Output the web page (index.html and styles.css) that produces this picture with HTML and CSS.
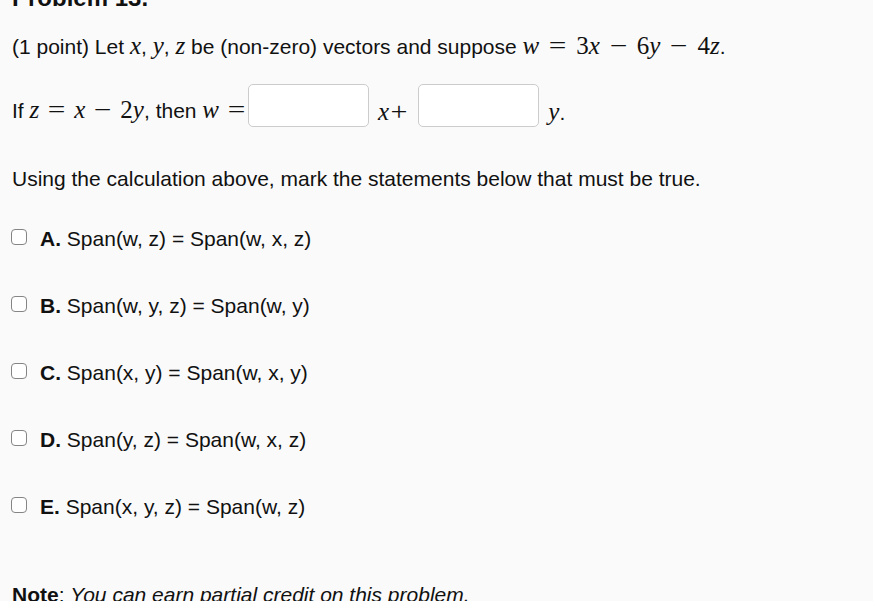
FILE: index.html
```html
<!DOCTYPE html>
<html>
<head>
<meta charset="utf-8">
<link rel="stylesheet" href="styles.css">
</head>
<body>
<div class="page">
  <h3 class="title">Problem 13.</h3>
  <p class="intro">(1 point) Let <span class="m">x</span>, <span class="m">y</span>, <span class="m">z</span> be (non-zero) vectors and suppose <span class="m">w</span><span class="op">=</span><span class="n">3</span><span class="m">x</span><span class="op">−</span><span class="n">6</span><span class="m">y</span><span class="op">−</span><span class="n">4</span><span class="m">z</span>.</p>
  <div class="fill">
    <span class="pre">If <span class="m">z</span><span class="op">=</span><span class="m">x</span><span class="op">−</span><span class="n">2</span><span class="m">y</span>, then <span class="m">w</span><span class="op eq">=</span></span>
    <span class="box"></span>
    <span class="after"><span class="m">x</span><span class="plus">+</span></span>
    <span class="box"></span>
    <span class="after"><span class="m">y</span>.</span>
  </div>
  <p class="instr">Using the calculation above, mark the statements below that must be true.</p>
  <ul class="opts">
    <li><span class="cb"></span><span><b>A.</b> Span(w, z) = Span(w, x, z)</span></li>
    <li><span class="cb"></span><span><b>B.</b> Span(w, y, z) = Span(w, y)</span></li>
    <li><span class="cb"></span><span><b>C.</b> Span(x, y) = Span(w, x, y)</span></li>
    <li><span class="cb"></span><span><b>D.</b> Span(y, z) = Span(w, x, z)</span></li>
    <li><span class="cb"></span><span><b>E.</b> Span(x, y, z) = Span(w, z)</span></li>
  </ul>
  <p class="note"><b>Note</b>: <i>You can earn partial credit on this problem.</i></p>
</div>
</body>
</html>
```

FILE: styles.css
```css
html, body {
  margin: 0;
  padding: 0;
  background: #fafafa;
}
body {
  font-family: "Liberation Sans", Arial, sans-serif;
  font-size: 21px;
  color: #111;
  overflow: hidden;
  height: 601px;
}
.page {
  padding: 0 12px;
  margin-top: -16px;
}
.title {
  font-size: 24px;
  font-weight: bold;
  margin: 0;
  line-height: 28px;
}
.intro {
  margin: 22px 0 0;
  line-height: 24px;
}
.intro .op {
  margin: 0 9px;
}
.m {
  font-family: "Liberation Serif", "DejaVu Serif", serif;
  font-style: italic;
  font-size: 25px;
}
.n, .op, .plus {
  font-family: "Liberation Serif", "DejaVu Serif", serif;
  font-size: 25px;
}
.op {
  display: inline-block;
  width: 19px;
  text-align: center;
  margin: 0 8px;
  transform: scaleX(1.25);
}
.fill .eq { margin-right: 2px; }
.plus {
  display: inline-block;
  transform: scaleX(1.2);
  margin-left: 3px;
}
.fill {
  display: flex;
  align-items: flex-end;
  margin-top: 25px;
  line-height: 24px;
}
.pre {
  padding-bottom: 4px;
}
.box {
  width: 119px;
  height: 41px;
  border: 1px solid #ccc;
  border-radius: 5px;
  background: #fff;
  flex: none;
}
.after {
  margin: 0 12px 0 9px;
  padding-bottom: 2px;
}
.instr {
  margin: 40px 0 0;
  line-height: 24px;
}
.opts {
  list-style: none;
  padding: 0;
  margin: 36px 0 0;
}
.opts li {
  display: flex;
  align-items: center;
  gap: 13px;
  height: 24px;
  margin-bottom: 43px;
}
.cb {
  width: 14px;
  height: 14px;
  border: 1.5px solid #858585;
  border-radius: 4px;
  background: #fff;
  flex: none;
  margin-top: -4px;
  margin-left: -1px;
}
.note {
  margin: 64px 0 0;
  line-height: 24px;
}
```
